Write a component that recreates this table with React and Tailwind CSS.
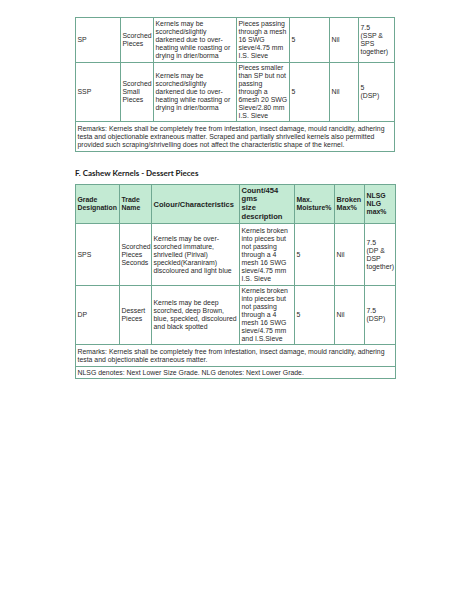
import React from 'react';

const topRows = [
  {
    h: 'h-[45px]',
    cells: [
      'SP',
      'Scorched\nPieces',
      'Kernels may be\nscorched/slightly\ndarkened due to over-\nheating while roasting or\ndrying in drier/borma',
      'Pieces passing\nthrough a mesh\n16 SWG\nsieve/4.75 mm\nI.S. Sieve',
      '5',
      'Nil',
      '7.5\n(SSP &\nSPS\ntogether)',
    ],
  },
  {
    h: 'h-[59px]',
    cells: [
      'SSP',
      'Scorched\nSmall\nPieces',
      'Kernels may be\nscorched/slightly\ndarkened due to over-\nheating while roasting or\ndrying in drier/borma',
      'Pieces smaller\nthan SP but not\npassing\nthrough a\n6mesh 20 SWG\nSieve/2.80 mm\nI.S. Sieve',
      '5',
      'Nil',
      '5\n(DSP)',
    ],
  },
];

const dessertRows = [
  {
    h: 'h-[62px]',
    cells: [
      'SPS',
      'Scorched\nPieces\nSeconds',
      'Kernels may be over-\nscorched immature,\nshrivelled (Pirival)\nspeckled(Karaniram)\ndiscoloured and light blue',
      'Kernels broken\ninto pieces but\nnot passing\nthrough a 4\nmesh 16 SWG\nsieve/4.75 mm\nI.S. Sieve',
      '5',
      'Nil',
      '7.5\n(DP &\nDSP\ntogether)',
    ],
  },
  {
    h: 'h-[59px]',
    cells: [
      'DP',
      'Dessert\nPieces',
      'Kernels may be deep\nscorched, deep Brown,\nblue, speckled, discoloured\nand black spotted',
      'Kernels broken\ninto pieces but\nnot passing\nthrough a 4\nmesh 16 SWG\nsieve/4.75 mm\nand I.S.Sieve',
      '5',
      'Nil',
      '7.5\n(DSP)',
    ],
  },
];

const td = 'border border-[#6fa892] px-[1.5px] py-0 align-middle whitespace-pre text-[6.9px] leading-[8px] text-[#2a2a2a]';
const th = 'border border-[#6fa892] px-[1.5px] py-0 align-middle whitespace-pre font-bold text-left text-[#1e1e1e]';

export default function App() {
  return (
    <div className="w-[474px] h-[613px] bg-white pt-[17px] pl-[75px] font-['Liberation_Sans',Arial,sans-serif]">
      {/* Top table - scorched pieces */}
      <table className="w-[319px] table-fixed border-collapse border border-[#5f9c86]">
        <colgroup>
          <col className="w-[45px]" />
          <col className="w-[33px]" />
          <col className="w-[83px]" />
          <col className="w-[53px]" />
          <col className="w-[40px]" />
          <col className="w-[29px]" />
          <col className="w-[36px]" />
        </colgroup>
        <tbody>
          {topRows.map((row, i) => (
            <tr key={i} className={row.h}>
              {row.cells.map((c, j) => (
                <td key={j} className={td}>{c}</td>
              ))}
            </tr>
          ))}
          <tr className="h-[30px]">
            <td colSpan={7} className={td}>
              {'Remarks: Kernels shall be completely free from infestation, insect damage, mould rancidity, adhering\ntesta and objectionable extraneous matter. Scraped and partially shrivelled kernels also permitted\nprovided such scraping/shrivelling does not affect the characteristic shape of the kernel.'}
            </td>
          </tr>
        </tbody>
      </table>

      <h2 className="mt-[16px] mb-[6px] font-['Lato',sans-serif] font-bold text-[8px] leading-[10px] text-[#1a1a1a]">
        F. Cashew Kernels - Dessert Pieces
      </h2>

      {/* Dessert pieces table */}
      <table className="w-[320px] table-fixed border-collapse border border-[#5f9c86]">
        <colgroup>
          <col className="w-[44px]" />
          <col className="w-[32px]" />
          <col className="w-[88px]" />
          <col className="w-[55px]" />
          <col className="w-[40px]" />
          <col className="w-[30px]" />
          <col className="w-[31px]" />
        </colgroup>
        <thead>
          <tr className="h-[39px] bg-[#c3ead3]">
            <th className={`${th} text-[6.9px] leading-[8px]`}>{'Grade\nDesignation'}</th>
            <th className={`${th} text-[6.9px] leading-[8px]`}>{'Trade\nName'}</th>
            <th className={`${th} text-[7.5px] leading-[9px]`}>Colour/Characteristics</th>
            <th className={`${th} text-[7.6px] leading-[8.7px]`}>{'Count/454\ngms\nsize\ndescription'}</th>
            <th className={`${th} text-[6.9px] leading-[8px]`}>{'Max.\nMoisture%'}</th>
            <th className={`${th} text-[7.2px] leading-[8px]`}>{'Broken\nMax%'}</th>
            <th className={`${th} text-[6.9px] leading-[8px]`}>{'NLSG\nNLG\nmax%'}</th>
          </tr>
        </thead>
        <tbody>
          {dessertRows.map((row, i) => (
            <tr key={i} className={row.h}>
              {row.cells.map((c, j) => (
                <td key={j} className={td}>{c}</td>
              ))}
            </tr>
          ))}
          <tr className="h-[22px]">
            <td colSpan={7} className={td}>
              {'Remarks: Kernels shall be completely free from infestation, insect damage, mould rancidity, adhering\ntesta and objectionable extraneous matter.'}
            </td>
          </tr>
          <tr className="h-[12px]">
            <td colSpan={7} className={td}>
              NLSG denotes: Next Lower Size Grade. NLG denotes: Next Lower Grade.
            </td>
          </tr>
        </tbody>
      </table>
    </div>
  );
}
